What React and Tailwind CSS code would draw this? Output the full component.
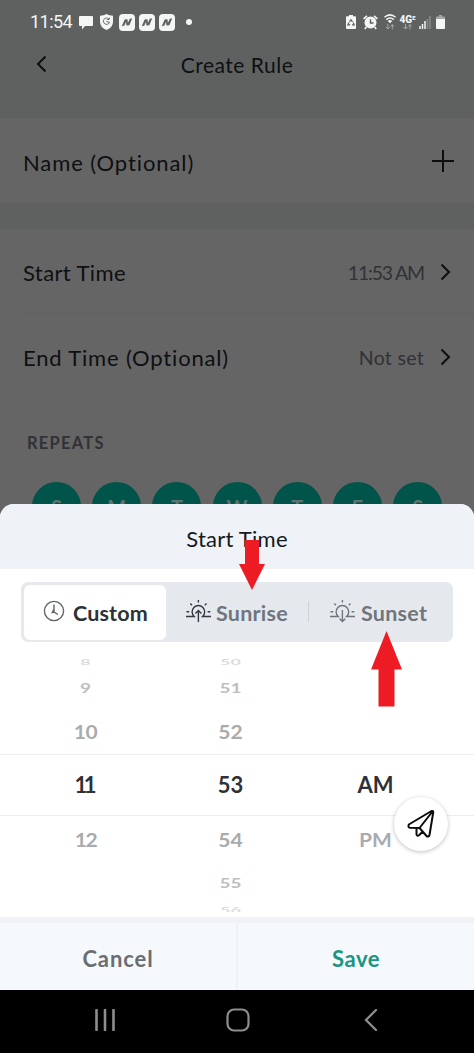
import React from 'react';
import clsx from 'clsx';

const DAYS = ['S', 'M', 'T', 'W', 'T', 'F', 'S'];

const HOURS = ['8', '9', '10', '11', '12', '', ''];
const MINUTES = ['50', '51', '52', '53', '54', '55', '56'];
const PERIODS = ['', '', '', 'AM', 'PM', '', ''];

// The wheel gets flatter and paler away from the selected row
const WHEEL_ROWS = [
  { box: 'h-[14px]', text: 'text-[#dcdcdd] scale-y-[0.4] text-[18px]' },
  { box: 'h-9', text: 'text-[#bdbec0] scale-y-[0.68] text-[19px]' },
  { box: 'h-[50px] pt-[3px]', text: 'text-[#a9abae] scale-y-[0.93] text-[21px]' },
  { box: 'h-[61px] pb-px', text: 'text-[#2e3136] text-[22px]' },
  { box: 'h-[45px] pt-px', text: 'text-[#a9abae] scale-y-[0.93] text-[21px]' },
  { box: 'h-[42px]', text: 'text-[#bdbec0] scale-y-[0.68] text-[19px]' },
  { box: 'h-[9px] pt-1', text: 'text-[#dcdcdd] scale-y-[0.4] text-[18px]' },
];

// Ones sit closer together than the tabular digits allow
const DIGIT_TRACKING = {
  10: 'tracking-[-0.5px]',
  11: 'tracking-[-3.5px] pr-[3.5px]',
  12: 'tracking-[-1.5px]',
};

function NewsIcon() {
  return (
    <svg width="16" height="17" viewBox="0 0 16 17">
      <rect width="16" height="17" rx="4" fill="#f4f5f5" />
      <path d="M2.800 12.200 5.300 6.200Q5.900 5 7.200 5.200L8.600 5.600 8.900 8.900 10.800 4.800 13.200 4.300 10.700 10.500Q10.100 11.700 8.900 11.600L7.400 11.300 7 7.900 5.200 11.700z" fill="#5e6160" />
    </svg>
  );
}

function DataArrows() {
  return <path d="M2.500 0v5M.6 3l1.900 2 1.900-2M7 5.500v-5M5.100 2.500 7 .5l1.900 2" fill="none" stroke="#a5a7a6" strokeWidth="1" />;
}

function StatusBar() {
  return (
    <div className="flex h-11 items-center justify-between pl-[30px] pr-[29px]">
      <div className="flex items-center">
        <span className="w-[49px] whitespace-nowrap font-['Roboto',sans-serif] text-[18px] leading-none tracking-[-0.55px] text-[#f4f5f5]">11:54</span>
        <svg width="14" height="15" viewBox="0 0 14 15" className="mr-[7px]">
          <path d="M1 1h12q1 0 1 1v8q0 1-1 1H6l-3 3.500V11H1q-1 0-1-1V2q0-1 1-1z" fill="#f4f5f5" />
        </svg>
        <svg width="13" height="16" viewBox="0 0 13 16" className="mr-[6px]">
          <path d="M6.500 0Q9 1.500 13 1.800V8q0 5.200-6.500 8Q0 13.200 0 8V1.800Q4 1.500 6.500 0z" fill="#f4f5f5" />
          <path d="M8.900 5A3.200 3.200 0 1 0 9.600 8.200L6.400 7.600M6.800 5.600l2.500-.2.200-1.700" fill="none" stroke="#5e6160" strokeWidth="0.900" />
        </svg>
        <div className="flex gap-1">
          <NewsIcon />
          <NewsIcon />
          <NewsIcon />
        </div>
        <div className="ml-[11px] size-[6px] rounded-full bg-[#f4f5f5]" />
      </div>
      <div className="flex items-center">
        <svg width="10" height="14" viewBox="0 0 10 14" className="mr-[7px]">
          <path d="M3 0h4v1.300h2q1 0 1 1V13q0 1-1 1H1q-1 0-1-1V2.300q0-1 1-1h2z" fill="#f4f5f5" />
          <path d="M3.500 6.800 5 4.700l1.500 2.100M7.200 7.600l1 2.200H6M4.200 9.800H1.800l1.100-2.300" fill="none" stroke="#5e6160" strokeWidth="1.200" />
        </svg>
        <svg width="15" height="15" viewBox="0 0 15 15" className="mr-[6px]">
          <circle cx="7.500" cy="7.600" r="6" fill="#f4f5f5" />
          <path d="M.6 3.800 4 .8M14.400 3.800 11 .8M3.300 12 1.800 14M11.700 12l1.500 2" stroke="#f4f5f5" strokeWidth="1.600" />
          <path d="M7.500 4.300V8h3" fill="none" stroke="#5e6160" strokeWidth="1.400" />
        </svg>
        <svg width="12" height="16" viewBox="0 0 12 16" className="mr-[3px]">
          <path d="M.4 3.300Q6-1.500 11.600 3.300M2.300 5.600Q6 2.500 9.700 5.600" fill="none" stroke="#f4f5f5" strokeWidth="1.500" />
          <path d="M3.800 7Q6 5.200 8.200 7L6 9.200z" fill="#f4f5f5" />
          <g transform="translate(1.300 10)"><DataArrows /></g>
        </svg>
        <div className="mr-[3px] flex w-[17px] flex-col items-center">
          <span className="flex items-start whitespace-nowrap font-['Roboto',sans-serif] text-[10px] font-black leading-[9px] text-[#f4f5f5]">
            4G<span className="text-[6px] leading-[6px]">E</span>
          </span>
          <svg width="10" height="6" viewBox="0 0 10 6"><DataArrows /></svg>
        </div>
        <svg width="12" height="13" viewBox="0 0 12 13" className="mr-[5px]">
          <path d="M1 10v3M3.500 8v5M6 5v8" stroke="#f4f5f5" strokeWidth="1.500" />
          <path d="M8.500 3v10M11 0v13" stroke="#898b8a" strokeWidth="1.500" />
        </svg>
        <svg width="9" height="14" viewBox="0 0 9 14">
          <path d="M3 0h3v1.500h2q1 0 1 1V5H0V2.500q0-1 1-1h2z" fill="#a5a7a6" />
          <path d="M0 4h9v9q0 1-1 1H1q-1 0-1-1z" fill="#f4f5f5" />
        </svg>
      </div>
    </div>
  );
}

function Chevron({ left = false, className }) {
  return (
    <svg width="11" height="18" viewBox="0 0 11 18" className={className}>
      <path d={left ? 'M9.500 1.500 2 9l7.500 7.500' : 'M1.500 1.500 9 9l-7.500 7.500'} fill="none" stroke="#0c0f10" strokeWidth="2" />
    </svg>
  );
}

function Row({ label, labelClass, value, valueClass, children }) {
  return (
    <div className="flex h-[85px] items-center pl-[23px] pr-[19px] pt-0.5">
      <span className={clsx('whitespace-nowrap text-[22px] text-[#0e1012]', labelClass)}>{label}</span>
      <span className={clsx('ml-auto whitespace-nowrap text-[19.5px] text-[#303236]', valueClass)}>{value}</span>
      {children}
    </div>
  );
}

function SunIcon({ set = false, color }) {
  return (
    <svg width="25" height="24" viewBox="0 0 25 24" className="shrink-0" fill="none" stroke={color} strokeWidth="1.400">
      <path d="M0 17.500h8.200a6.300 6.300 0 1 1 8.400 0H25" />
      <path d="M12.400 1v2.500M4.300 4.500 6 6.200M20.500 4.500l-1.700 1.700M.5 12.800h2.700M21.600 12.800h2.700" />
      <path d={set ? 'M12.400 11v11.500M9.600 19.700l2.800 2.800 2.800-2.800' : 'M12.400 23V11.500M9.400 14.500l3-3 3 3'} />
    </svg>
  );
}

function Segments() {
  return (
    <div className="mx-[21px] mt-[13px] flex h-[60px] items-center rounded-[7px] bg-[#e5e9ed] p-[3px] text-[21.500px] font-bold text-[#70757e]">
      <div className="flex h-[55px] w-[142px] items-center rounded-[6px] bg-white pl-[19px] text-[#2e3136]">
        <svg width="22" height="22" viewBox="0 0 22 22" className="mb-[3px] mr-[8px]" fill="none" stroke="#62656a" strokeWidth="1.400">
          <circle cx="11" cy="11" r="9.600" />
          <path d="M11 4.500V12l4 2.500M11 9l-1.700 3.500L11 12" />
        </svg>
        <span className="pt-[3px] tracking-[0.15px]">Custom</span>
      </div>
      <div className="flex w-[142px] items-center pl-[20px]">
        <div className="mb-[2px] mr-[5px] flex"><SunIcon color="#35393f" /></div>
        <span className="pt-[3px] tracking-[0.25px]">Sunrise</span>
      </div>
      <div className="mb-px h-[21px] w-px bg-[#cfd3d7]" />
      <div className="flex items-center pl-[21px]">
        <div className="mb-[2px] mr-[6px] flex"><SunIcon set color="#70757e" /></div>
        <span className="pt-[3px] tracking-[0.25px]">Sunset</span>
      </div>
    </div>
  );
}

function WheelColumn({ items }) {
  return (
    <div className="w-[145px]">
      {items.map((item, i) => (
        <div key={i} className={clsx('flex items-center justify-center overflow-hidden', WHEEL_ROWS[i].box)}>
          <span className={clsx('font-bold leading-none', WHEEL_ROWS[i].text, DIGIT_TRACKING[item])}>{item}</span>
        </div>
      ))}
    </div>
  );
}

export default function App() {
  return (
    <div className="relative flex h-[1053px] w-[474px] flex-col overflow-hidden bg-[#656565] font-['Lato',sans-serif]">
      {/* Dimmed rule form */}
      <div className="h-[504px] shrink-0 overflow-hidden">
        <div className="h-[118px] bg-[#5e6160]">
          <StatusBar />
          <div className="grid h-[42px] grid-cols-3 items-center">
            <Chevron left className="mb-0.5 ml-[36px]" />
            <h1 className="text-center text-[21px] tracking-[0.5px] text-[#0b1114]">Create Rule</h1>
          </div>
        </div>
        <Row label="Name (Optional)" labelClass="pt-px tracking-[0.9px]">
          <svg width="24" height="24" viewBox="0 0 24 24" className="mb-[2px]">
            <path d="M1 12h22M12 1v22" stroke="#0c0f10" strokeWidth="2" />
          </svg>
        </Row>
        <div className="h-[26px] bg-[#5e6160]" />
        <Row label="Start Time" labelClass="tracking-[0.4px]" value="11:53 AM" valueClass="tracking-[-1.2px]">
          <Chevron className="mb-0.5 ml-4 mr-[4px]" />
        </Row>
        <div className="-mt-px ml-6 h-px bg-[#606162]" />
        <Row label="End Time (Optional)" labelClass="tracking-[0.82px]" value="Not set" valueClass="tracking-[0.3px]">
          <Chevron className="mb-0.5 ml-4 mr-[4px]" />
        </Row>
        <h2 className="ml-[27px] mt-[34px] text-[16.500px] font-bold leading-5 tracking-[1.250px] text-[#303236]">REPEATS</h2>
        <div className="ml-8 mt-[29px] flex gap-[11.200px]">
          {DAYS.map((day, i) => (
            <div key={i} className="flex size-[49px] shrink-0 items-center justify-center rounded-full bg-[#00544a] text-[20px] font-bold text-[#5f7370]">
              {day}
            </div>
          ))}
        </div>
      </div>

      {/* Start time sheet */}
      <div className="flex h-[486px] shrink-0 flex-col overflow-hidden rounded-t-[14px] bg-white">
        <div className="flex h-[65px] shrink-0 items-center justify-center bg-[#eff3f7] pt-1 text-[22px] tracking-[0.250px] text-[#16191d]">
          Start Time
        </div>
        <Segments />
        <div className="relative mt-[13px] h-[262px] shrink-0">
          <div className="flex pl-[13px]">
            <WheelColumn items={HOURS} />
            <WheelColumn items={MINUTES} />
            <WheelColumn items={PERIODS} />
          </div>
          {/* Selected row rules */}
          <div className="absolute inset-x-0 top-[99px] h-[62px] border-y border-[#eceef0]" />
        </div>
        <div className="h-[6px] shrink-0 bg-[#f0f2f6]" />
        <div className="flex flex-1 bg-[#f5f9fc] text-[22px] font-bold">
          <button className="w-[238px] border-r-2 border-[#eff2f5] pt-1 tracking-[0.9px] text-[#6a6d73]">Cancel</button>
          <button className="w-[236px] pt-1 tracking-[0.6px] text-[#1a9583]">Save</button>
        </div>
      </div>

      {/* System navigation */}
      <div className="flex h-[63px] shrink-0 items-center bg-black pb-[3px] pl-[94px]">
        <svg width="22" height="22" viewBox="0 0 22 22">
          <path d="M2.500 1v20M11 1v20M19.500 1v20" stroke="#8e8e8e" strokeWidth="2.600" strokeLinecap="round" />
        </svg>
        <svg width="24" height="24" viewBox="0 0 24 24" className="ml-[110px]">
          <rect x="1.500" y="1.500" width="21" height="21" rx="6.500" fill="none" stroke="#8e8e8e" strokeWidth="2.200" />
        </svg>
        <svg width="14" height="22" viewBox="0 0 14 22" className="ml-[114px]">
          <path d="M12 1 2 11l10 10" fill="none" stroke="#8e8e8e" strokeWidth="2.300" strokeLinecap="round" />
        </svg>
      </div>

      {/* Floating send button */}
      <button className="absolute left-[394px] top-[797px] flex size-[54px] items-center justify-center rounded-full bg-white shadow-[0_1px_4px_rgba(0,0,0,0.25)]">
        <svg width="28" height="28" viewBox="0 0 28 28" fill="none" stroke="#0c0c0c" strokeWidth="2" strokeLinejoin="round" strokeLinecap="round">
          <path d="M24.500 1 1.800 14.500Q.8 17.500 3 17.700l9.500.3 7.500 8.500q2 .5 2.500-1.500L26.300 2Q26 .7 24.500 1zM25.500 1.500 12.500 18M9.500 18v6.500q.8 2 2.500.8l3.500-3.500" />
        </svg>
      </button>

      {/* Callout arrows */}
      <svg width="26" height="50" viewBox="0 0 26 50" className="absolute left-[239px] top-[540px]">
        <path d="M6 0h14v24h6L13 50 0 24h6z" fill="#ed1c24" />
      </svg>
      <svg width="31" height="76" viewBox="0 0 31 76" className="absolute left-[371px] top-[631px]">
        <path d="M15.500 0 31 38.500h-7.500V75.500h-16v-37H0z" fill="#ed1c24" />
      </svg>
    </div>
  );
}
